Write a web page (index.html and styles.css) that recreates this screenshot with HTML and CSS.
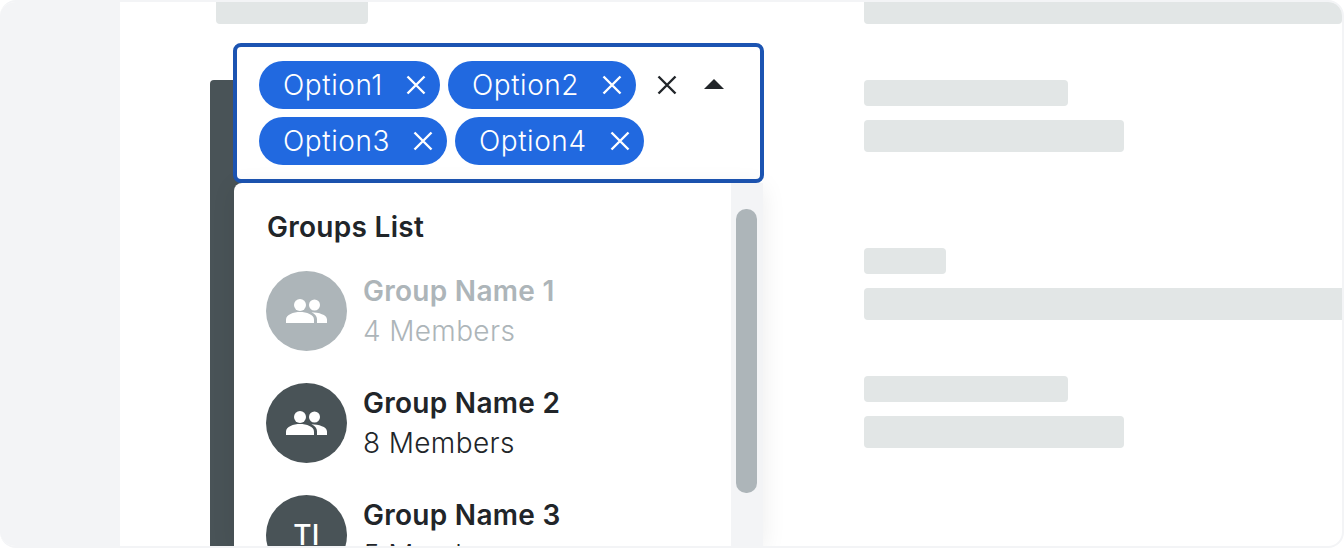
FILE: index.html
```html
<!DOCTYPE html>
<html lang="en">
  <head>
    <meta charset="UTF-8" />
    <meta name="viewport" content="width=device-width, initial-scale=1.0" />
    <title>Groups multi select</title>
    <link rel="stylesheet" href="styles.css">
  </head>
  <body>
    <svg class="icon-defs" width="0" height="0" aria-hidden="true">
      <symbol id="icon-x" viewBox="0 0 20 20">
        <path d="M1.500 1.500L18.500 18.500M18.500 1.500L1.500 18.500" fill="none" stroke="currentColor" stroke-width="2.400" />
      </symbol>
      <symbol id="icon-group" viewBox="0 0 41 24">
        <circle cx="14" cy="6" r="6" />
        <circle cx="28.500" cy="6" r="5.500" />
        <path d="M0 24v-3.500C0 15.500 7.500 13 14 13s14 2.500 14 7.500V24z" />
        <path d="M25.500 13.300c7 .3 15.500 2.300 15.500 7.200V24H31v-4c0-2.800-2.500-5.200-5.500-6.700z" />
      </symbol>
    </svg>

    <div class="frame">
      <div class="sidebar"></div>

      <main class="content">
        <section class="left-col">
          <div class="stub"></div>
          <div class="dark-block"></div>

          <!-- open dropdown, sits over the page -->
          <div class="dropdown">
            <div class="select-box">
              <div class="chips">
                <span class="chip">Option1 <svg class="chip-x"><use href="#icon-x" /></svg></span>
                <span class="chip">Option2 <svg class="chip-x"><use href="#icon-x" /></svg></span>
                <span class="chip">Option3 <svg class="chip-x"><use href="#icon-x" /></svg></span>
                <span class="chip">Option4 <svg class="chip-x"><use href="#icon-x" /></svg></span>
              </div>
              <div class="select-actions">
                <svg class="clear-x"><use href="#icon-x" /></svg>
                <span class="caret"></span>
              </div>
            </div>

            <div class="panel">
              <div class="list">
                <h3 class="list-title">Groups List</h3>
                <div class="group-row disabled">
                  <div class="avatar"><svg class="group-icon"><use href="#icon-group" /></svg></div>
                  <div class="group-text">
                    <div class="group-name">Group Name 1</div>
                    <div class="group-count">4 Members</div>
                  </div>
                </div>
                <div class="group-row">
                  <div class="avatar"><svg class="group-icon"><use href="#icon-group" /></svg></div>
                  <div class="group-text">
                    <div class="group-name">Group Name 2</div>
                    <div class="group-count">8 Members</div>
                  </div>
                </div>
                <div class="group-row">
                  <div class="avatar">TI</div>
                  <div class="group-text">
                    <div class="group-name">Group Name 3</div>
                    <div class="group-count">5 Members</div>
                  </div>
                </div>
              </div>
              <div class="track"><div class="thumb"></div></div>
            </div>
          </div>
        </section>

        <section class="right-col">
          <div class="stub stub-wide"></div>
          <div class="field">
            <div class="bar bar-label"></div>
            <div class="bar bar-input"></div>
          </div>
          <div class="field field-far">
            <div class="bar bar-label-short"></div>
            <div class="bar bar-input-wide"></div>
          </div>
          <div class="field">
            <div class="bar bar-label"></div>
            <div class="bar bar-input"></div>
          </div>
        </section>
      </main>
    </div>
  </body>
</html>
```

FILE: styles.css
```css
:root {
  --gray-light: #f3f4f6;
  --skeleton: #e2e6e6;
  --dark: #495357;
  --muted: #adb5b9;
  --text: #212529;
  --blue: #2169e0;
  --blue-dark: #1c54b2;
}

* {
  margin: 0;
  padding: 0;
  box-sizing: border-box;
  font-family: "Inter", "Liberation Sans", sans-serif;
}

body {
  background: white;
  letter-spacing: 0.28px;
}

.icon-defs {
  position: absolute;
}

.frame {
  display: flex;
  height: 548px;
  border: 2px solid var(--gray-light);
  border-left: none;
  border-radius: 16px;
  overflow: hidden;
}

.sidebar {
  width: 120px;
  flex-shrink: 0;
  background-color: var(--gray-light);
}

.content {
  flex: 1;
  display: grid;
  grid-template-columns: 744px 1fr;
}

/* 左欄 */
.left-col {
  position: relative;
  display: flex;
  flex-direction: column;
  padding-left: 90px;
}

.stub {
  width: 152px;
  height: 22px;
  margin-left: 6px;
  background-color: var(--skeleton);
  border-radius: 0 0 4px 4px;
}

.stub-wide {
  width: 100%;
  margin-left: 0;
}

.dark-block {
  flex: 1;
  width: 300px;
  margin-top: 56px;
  background-color: var(--dark);
  border-radius: 4px 0 0 0;
}

.dropdown {
  position: absolute;
  top: 41px;
  left: 113px;
  bottom: 0;
  width: 531px;
  display: flex;
  flex-direction: column;
}

.select-box {
  display: flex;
  justify-content: space-between;
  height: 140px;
  padding: 14px 22px;
  background: white;
  border: 4px solid var(--blue-dark);
  border-radius: 8px;
}

.chips {
  display: flex;
  flex-wrap: wrap;
  align-content: flex-start;
  gap: 8px;
  width: 400px;
}

.chip {
  display: flex;
  align-items: center;
  justify-content: space-between;
  height: 48px;
  padding: 0 14px 0 24px;
  gap: 23px;
  background-color: var(--blue);
  border-radius: 24px;
  color: white;
  font-size: 28px;
  font-weight: 350;
  letter-spacing: 0.56px;
}

.chip-x {
  width: 20px;
  height: 20px;
  color: white;
}

.select-actions {
  display: flex;
  align-items: center;
  gap: 27px;
  height: 48px;
  padding-right: 14px;
}

.clear-x {
  width: 20px;
  height: 20px;
  color: var(--text);
}

.caret {
  width: 0;
  height: 0;
  margin-top: -3px;
  border-left: 10px solid transparent;
  border-right: 10px solid transparent;
  border-bottom: 10px solid var(--text);
}

.panel {
  flex: 1;
  display: flex;
  margin: 0 1px;
  background: white;
  border-radius: 8px 0 0 0;
  box-shadow: 0 4px 24px rgba(0, 0, 0, 0.08);
  overflow: hidden;
}

.list {
  flex: 1;
  padding: 24px 32px;
}

.list-title {
  margin-bottom: 24px;
  padding-left: 1px;
  font-size: 28px;
  line-height: 40px;
  font-weight: 600;
  color: var(--text);
}

.group-row {
  display: flex;
  gap: 16px;
  margin-bottom: 32px;
  color: var(--text);
}

.avatar {
  display: flex;
  align-items: center;
  justify-content: center;
  flex-shrink: 0;
  width: 81px;
  height: 80px;
  border-radius: 50%;
  background-color: var(--dark);
  color: white;
  font-size: 28px;
  font-weight: 500;
}

.group-icon {
  width: 41px;
  height: 24px;
  fill: white;
}

.group-name {
  font-size: 28px;
  line-height: 40px;
  font-weight: 600;
}

.group-count {
  font-size: 28px;
  line-height: 40px;
  font-weight: 350;
  letter-spacing: 0.36px;
}

.disabled {
  color: var(--muted);
}

.disabled .avatar {
  background-color: var(--muted);
}

.track {
  width: 32px;
  padding: 26px 5px 0;
  background-color: var(--gray-light);
}

.thumb {
  width: 21px;
  height: 284px;
  background-color: var(--muted);
  border-radius: 10px;
}

/* 右欄 */
.right-col {
  display: flex;
  flex-direction: column;
}

.field {
  display: flex;
  flex-direction: column;
  gap: 14px;
  margin-top: 56px;
}

.field-far {
  margin-top: 96px;
}

.bar {
  background-color: var(--skeleton);
  border-radius: 4px;
}

.bar-label {
  width: 204px;
  height: 26px;
}

.bar-label-short {
  width: 82px;
  height: 26px;
}

.bar-input {
  width: 260px;
  height: 32px;
}

.bar-input-wide {
  width: 100%;
  height: 32px;
  border-radius: 4px 0 0 4px;
}
```
